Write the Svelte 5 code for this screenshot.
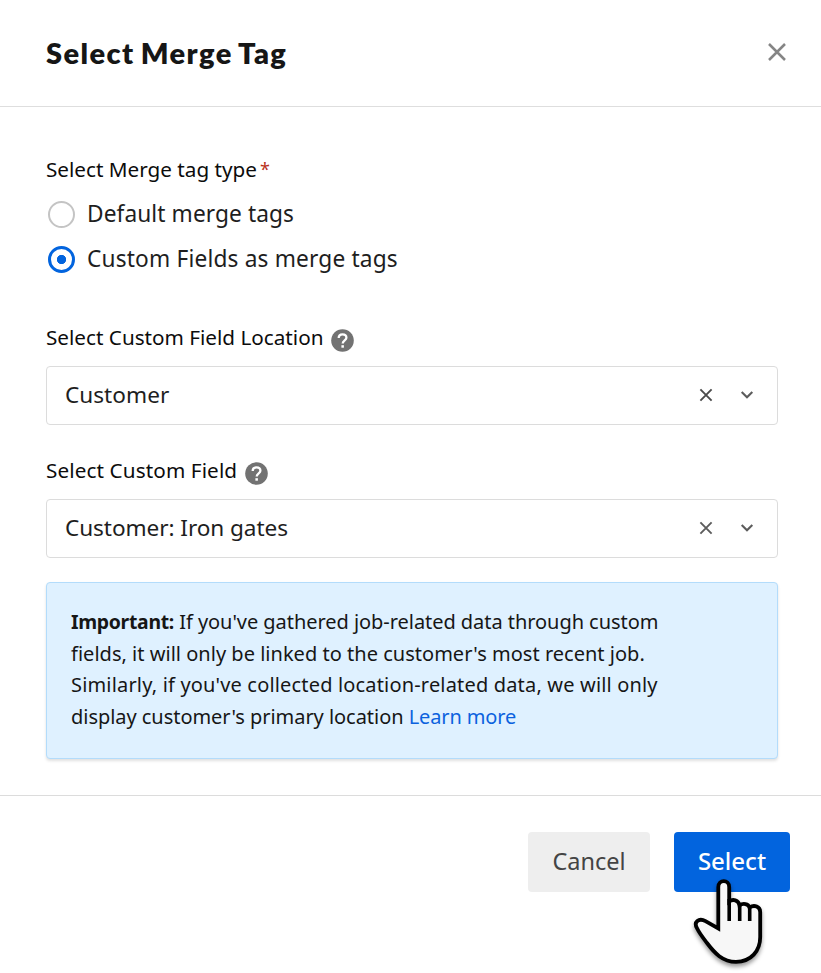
<script>
  let type = $state('custom');

  const types = [
    { id: 'default', label: 'Default merge tags', spacing: 0.09 },
    { id: 'custom', label: 'Custom Fields as merge tags', spacing: 0.17 }
  ];

  const fields = [
    { label: 'Select Custom Field Location', value: 'Customer', clear: '#4b4b4b', spacing: 0.02, labelSpacing: 0 },
    { label: 'Select Custom Field', value: 'Customer: Iron gates', clear: '#5c5c5c', spacing: -0.07, labelSpacing: 0.11 }
  ];
</script>

<div class="modal">
  <header>
    <h1>Select Merge Tag</h1>
    <svg class="close" width="20" height="20" viewBox="0 0 20 20" aria-label="Close">
      <path d="M2 2 18 18M18 2 2 18" stroke="#858585" stroke-width="2.5" fill="none" />
    </svg>
  </header>

  <main>
    <div class="label first">Select Merge tag type<span class="star">*</span></div>
    <div class="radios">
      {#each types as t}
        <button class="option" onclick={() => (type = t.id)}>
          <span class="radio" class:on={type === t.id}></span>
          <span style:letter-spacing="{t.spacing}px">{t.label}</span>
        </button>
      {/each}
    </div>

    {#each fields as f}
      <div class="field">
        <div class="label" style:letter-spacing="{f.labelSpacing}px">
          {f.label}
          <svg class="help" width="23" height="23" viewBox="0 0 23 23">
            <circle cx="11.5" cy="11.5" r="11.3" fill="#727272" />
            <path d="M7.7 9.1C7.7 6.8 9.3 5.3 11.5 5.3S15.4 6.7 15.4 8.8C15.4 11.3 11.7 11.5 11.7 14.5" fill="none" stroke="#fff" stroke-width="2.3" />
            <rect x="10.4" y="16.2" width="2.5" height="2.5" fill="#fff" />
          </svg>
        </div>
        <div class="select">
          <span class="value" style:letter-spacing="{f.spacing}px">{f.value}</span>
          <svg class="clear" width="14" height="14" viewBox="0 0 14 14">
            <path d="M1.4 1.4 12.6 12.6M12.6 1.4 1.4 12.6" stroke={f.clear} stroke-width="1.9" fill="none" />
          </svg>
          <svg class="chevron" width="14" height="10" viewBox="0 0 14 10">
            <path d="M1.7 2 7 7.3 12.3 2" stroke="#5c5c5c" stroke-width="2.1" fill="none" />
          </svg>
        </div>
      </div>
    {/each}

    <div class="info">
      <div><b>Important:</b> <span class="l1">If you've gathered job-related data through custom</span></div>
      <div class="l2">fields, it will only be linked to the customer's most recent job.</div>
      <div class="l3">Similarly, if you've collected location-related data, we will only</div>
      <div class="l4">display customer's primary location <a href="#learn">Learn more</a></div>
    </div>
  </main>

  <footer>
    <button class="btn cancel">Cancel</button>
    <button class="btn primary">Select</button>
    <svg class="hand" width="90" height="100" viewBox="0 0 90 100">
      <path
        d="M33.3 58.5V17.2C33.3 9.2 44.2 9.2 44.2 17.2V31.5C47.8 28.7 53.6 29.9 54.5 35.5C58 32.8 63.4 33.8 64.5 37.5C69.5 34.2 75.2 36.8 75.2 42V67C75.2 81 66 91.8 51 91.8C37.5 91.8 29.5 83 22 73C18 67.8 14.5 63.5 12.3 58.8C8 52 14 47.5 20.5 51.2Z"
        fill="#f7f7f7" stroke="#000" stroke-width="3.8" />
      <path d="M44.2 29V51M54.7 35V51M64.7 37V51" stroke="#000" stroke-width="3.6" fill="none" />
    </svg>
  </footer>
</div>

<style>
  :global(body) {
    background: #fff;
  }
  .modal {
    box-sizing: border-box;
    width: 821px;
    height: 973px;
    position: relative;
    overflow: hidden;
    font-family: 'Noto Sans', sans-serif;
    color: #161616;
    display: flex;
    flex-direction: column;
  }
  header {
    box-sizing: border-box;
    height: 107px;
    border-bottom: 1px solid #dedede;
    display: flex;
    justify-content: space-between;
    padding: 34px 34px 0 46px;
  }
  h1 {
    margin: 0;
    font: 800 29px/38px 'Lato', sans-serif;
    letter-spacing: 1.4px;
    word-spacing: -1.9px;
    color: #161616;
  }
  .close {
    margin-top: 8px;
  }
  main {
    box-sizing: border-box;
    height: 688px;
    padding: 47px 43px 0 46px;
  }
  .label {
    display: flex;
    align-items: center;
    height: 30px;
    font-size: 20.7px;
    font-weight: 400;
    color: #0c0c0c;
    white-space: nowrap;
  }
  .star {
    color: #b9331c;
    margin-left: 3px;
    font-size: 18px;
  }
  .radios {
    display: flex;
    flex-direction: column;
    gap: 1px;
    margin-top: 8px;
  }
  .option {
    height: 44px;
    display: flex;
    align-items: center;
    gap: 12px;
    padding: 0 0 0 2px;
    border: 0;
    background: none;
    font: 400 22.7px/44px 'Noto Sans', sans-serif;
    color: #1e1e1e;
    white-space: nowrap;
  }
  .radio {
    box-sizing: border-box;
    width: 27px;
    height: 27px;
    border: 2px solid #c4c4c4;
    border-radius: 50%;
  }
  .radio.on {
    border: 3px solid #0264de;
    background: radial-gradient(circle, #0264de 4.3px, #fff 5px);
  }
  .field {
    height: 133.4px;
  }
  .radios + .field {
    margin-top: 41.1px;
  }
  .help {
    margin: 6px 0 0 8px;
  }
  .select {
    box-sizing: border-box;
    height: 59px;
    margin-top: 14px;
    border: 1px solid #dcdcdc;
    border-radius: 4px;
    display: flex;
    align-items: center;
    padding: 0 23px 0 18px;
  }
  .value {
    flex: 1;
    font-size: 22.6px;
    line-height: 57px;
    margin-top: -2px;
    color: #1e1e1e;
  }
  .clear {
    margin-top: -1.4px;
  }
  .chevron {
    margin: -2px 0 0 27px;
  }
  .info {
    box-sizing: border-box;
    height: 177px;
    margin-top: -6.9px;
    border: 1px solid #b3dcfb;
    border-radius: 4px;
    background: #dff1ff;
    box-shadow: 0 2px 3px rgba(0, 0, 0, 0.12);
    padding: 23px 24px;
    font-size: 20px;
    line-height: 31.6px;
    white-space: nowrap;
  }
  b {
    font-size: 19.4px;
    letter-spacing: -0.3px;
  }
  .l1 {
    letter-spacing: -0.05px;
  }
  .l2 {
    letter-spacing: 0.02px;
  }
  .l3 {
    letter-spacing: 0.17px;
  }
  .l4 {
    letter-spacing: -0.04px;
  }
  a {
    color: #0b62de;
    text-decoration: none;
    letter-spacing: -0.12px;
  }
  footer {
    box-sizing: border-box;
    flex: 1;
    border-top: 1px solid #dcdcdc;
    display: flex;
    align-items: flex-start;
    justify-content: flex-end;
    gap: 24px;
    padding: 36px 31px 0 0;
  }
  .btn {
    width: 122px;
    height: 60px;
    padding: 0 0 2px;
    border: 0;
    border-radius: 4px;
    background: #eee;
    color: #444;
    font: 400 23.5px/58px 'Noto Sans', sans-serif;
  }
  .primary {
    width: 116px;
    background: #0264de;
    color: #fff;
    font-weight: 500;
    font-size: 24px;
  }
  .hand {
    position: absolute;
    left: 685px;
    top: 870px;
    filter: drop-shadow(0 3px 2px rgba(0, 0, 0, 0.4));
  }
</style>
